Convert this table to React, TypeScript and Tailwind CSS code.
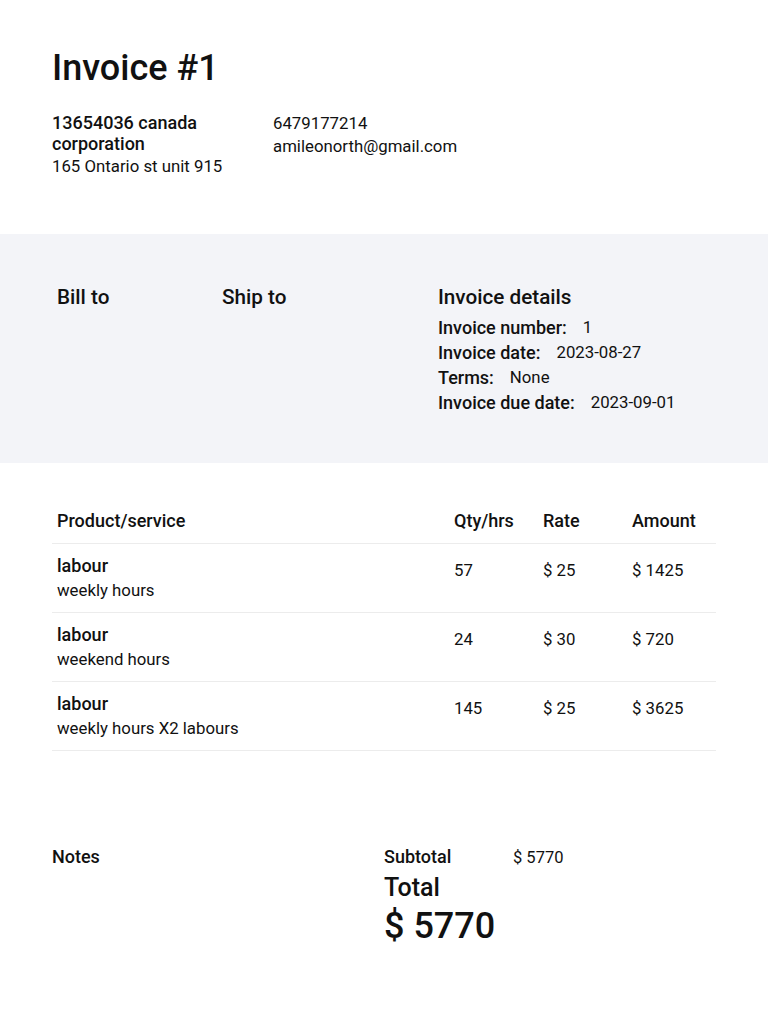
export default function App() {
  const rows = [
    { name: "labour", desc: "weekly hours", qty: "57", rate: "$ 25", amount: "$ 1425" },
    { name: "labour", desc: "weekend hours", qty: "24", rate: "$ 30", amount: "$ 720" },
    { name: "labour", desc: "weekly hours X2 labours", qty: "145", rate: "$ 25", amount: "$ 3625" },
  ];
  return (
    <div className="w-[768px] min-h-[1024px] bg-white text-[#111] font-['Roboto',sans-serif]">
      <div className="px-[52px] pt-[46px] pb-[55px]">
        <h1 className="text-[36px] leading-[44px] font-medium">Invoice #1</h1>
        <div className="mt-[22px] flex gap-[16px]">
          <div className="w-[205px]">
            <div className="text-[18px] leading-[21px] font-medium">13654036 canada corporation</div>
            <div className="text-[16.8px] leading-[25px]">165 Ontario st unit 915</div>
          </div>
          <div className="text-[16.8px] leading-[23px]">
            <div>6479177214</div>
            <div>amileonorth@gmail.com</div>
          </div>
        </div>
      </div>
      <div className="bg-[#f3f4f8] h-[229px] px-[57px] pt-[49px] flex">
        <div className="w-[165px] text-[20.7px] leading-[28px] font-medium">Bill to</div>
        <div className="w-[216px] text-[20.7px] leading-[28px] font-medium">Ship to</div>
        <div>
          <div className="text-[20.7px] leading-[28px] font-medium">Invoice details</div>
          <div className="mt-[4px] text-[16.8px] leading-[25px]">
            {[
              ["Invoice number:", "1"],
              ["Invoice date:", "2023-08-27"],
              ["Terms:", "None"],
              ["Invoice due date:", "2023-09-01"],
            ].map(([k, v]) => (
              <div key={k} className="flex h-[25px] items-baseline gap-4 overflow-visible">
                <span className="font-medium text-[18px] leading-[25px]">{k}</span>
                <span className="relative -top-[1px] leading-[25px]">{v}</span>
              </div>
            ))}
          </div>
        </div>
      </div>
      <div className="px-[52px] pt-[36px]">
        <table className="w-[664px] border-collapse text-[16.8px] leading-[24px]">
          <thead>
            <tr className="border-b border-[#ececec]">
              <th className="w-[397px] px-[5px] py-[10px] text-left font-medium text-[18px]">Product/service</th>
              <th className="w-[89px] px-[5px] py-[10px] text-left font-medium text-[18px]">Qty/hrs</th>
              <th className="w-[89px] px-[5px] py-[10px] text-left font-medium text-[18px]">Rate</th>
              <th className="w-[89px] px-[5px] py-[10px] text-left font-medium text-[18px]">Amount</th>
            </tr>
          </thead>
          <tbody>
            {rows.map((r, i) => (
              <tr key={i} className="border-b border-[#ececec]">
                <td className="px-[5px] py-[10px] align-top">
                  <div className="font-medium text-[18px]">{r.name}</div>
                  <div>{r.desc}</div>
                </td>
                <td className="px-[5px] pt-[14px] align-top">{r.qty}</td>
                <td className="px-[5px] pt-[14px] align-top">{r.rate}</td>
                <td className="px-[5px] pt-[14px] align-top">{r.amount}</td>
              </tr>
            ))}
          </tbody>
        </table>
      </div>
      <div className="px-[52px] pt-[94px] flex">
        <div className="w-[332px] text-[18px] leading-[24px] font-medium">Notes</div>
        <div>
          <div className="flex items-baseline text-[18px] leading-[24px]">
            <span className="w-[129px] font-medium">Subtotal</span>
            <span className="text-[16.5px]">$ 5770</span>
          </div>
          <div className="mt-[1px] text-[25px] leading-[34px] font-medium">Total</div>
          <div className="-mt-[1px] text-[36px] leading-[44px] font-medium">$ 5770</div>
        </div>
      </div>
    </div>
  );
}
